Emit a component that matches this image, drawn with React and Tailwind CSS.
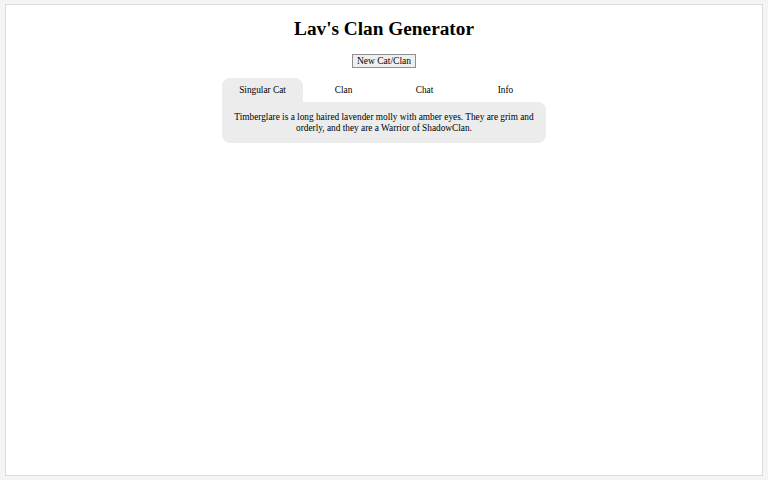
import { useState } from 'react';

const tabs = ["Singular Cat", "Clan", "Chat", "Info"];

export default function App() {
  const [active, setActive] = useState(0);

  return (
    <div className="w-[768px] h-[480px] bg-[#f4f4f4] pt-[4px] px-[5px] pb-[4px] font-['Liberation_Serif',serif] text-black">
      <div className="h-full bg-white border border-[#dcdcdc] flex flex-col items-center">
        <h1 className="mt-[12px] text-[19.3px] font-bold leading-[24px]">Lav's Clan Generator</h1>
        <button className="mt-[13px] px-[4px] h-[14px] text-[9.5px] leading-[12px] bg-[#efefef] border border-[#8f8f8f]">
          New Cat/Clan
        </button>
        <div className="mt-[10px] w-[324px]">
          <div className="grid grid-cols-4">
            {tabs.map((t, i) => (
              <button
                key={t}
                onClick={() => setActive(i)}
                className={`h-[24px] text-[9.3px] leading-[24px] rounded-t-[8px] ${i === active ? "bg-[#ececec]" : "bg-transparent"}`}
              >
                {t}
              </button>
            ))}
          </div>
          <div className="bg-[#ececec] rounded-b-[8px] rounded-tr-[8px] px-[10px] pt-[10px] pb-[9px] text-center text-[9.3px] leading-[11px]">
            Timberglare is a long haired lavender molly with amber eyes. They are grim and orderly, and they are a Warrior of ShadowClan.
          </div>
        </div>
      </div>
    </div>
  );
}
